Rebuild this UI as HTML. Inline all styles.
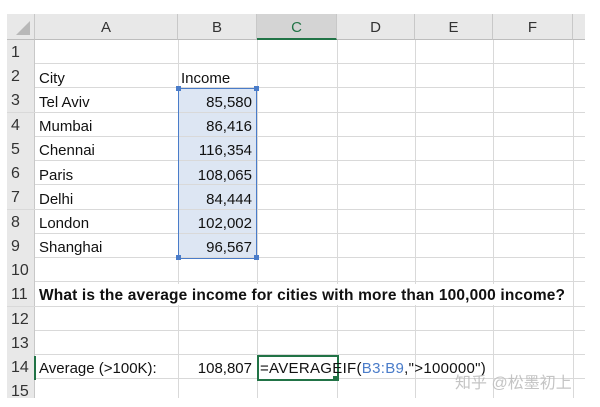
<!DOCTYPE html><html><head><style>
body{margin:0;width:600px;height:407px;background:#fff;overflow:hidden;font-family:"Liberation Sans",sans-serif;}
#g{position:absolute;left:7px;top:14px;width:578px;height:384px;overflow:hidden;background:#fff}
.v{position:absolute;top:0;width:1px;height:384px;background:#d9d9d9}
.h{position:absolute;left:0;height:1px;width:578px;background:#d9d9d9}
.t{position:absolute;font-size:15px;color:#111;line-height:24px;white-space:nowrap}
.r{text-align:right}
.hd{position:absolute;top:0;height:26px;background:#e8e8e8;border-right:1px solid #c8c8c8;border-bottom:1px solid #bdbdbd;box-sizing:border-box;font-size:15px;color:#333;text-align:center;line-height:27px}
.rn{position:absolute;left:0;width:28px;height:24px;background:#e8e8e8;border-right:1px solid #c8c8c8;box-sizing:border-box;font-size:16px;color:#333;padding-left:4px;line-height:25px}
</style></head><body><div id="g">
<div style="position:absolute;left:171px;top:74px;width:79px;height:170px;background:#dde6f3"></div>
<div class="v" style="left:171px"></div><div class="v" style="left:250px"></div><div class="v" style="left:330px"></div><div class="v" style="left:408px"></div><div class="v" style="left:486px"></div><div class="v" style="left:566px"></div>
<div class="h" style="top:49px"></div><div class="h" style="top:73px"></div><div class="h" style="top:98px"></div><div class="h" style="top:122px"></div><div class="h" style="top:146px"></div><div class="h" style="top:170px"></div><div class="h" style="top:195px"></div><div class="h" style="top:219px"></div><div class="h" style="top:243px"></div><div class="h" style="top:267px"></div><div class="h" style="top:292px"></div><div class="h" style="top:316px"></div><div class="h" style="top:340px"></div><div class="h" style="top:364px"></div>
<div class="rn" style="top:26px">1</div><div class="rn" style="top:50px">2</div><div class="rn" style="top:74px">3</div><div class="rn" style="top:99px">4</div><div class="rn" style="top:123px">5</div><div class="rn" style="top:147px">6</div><div class="rn" style="top:171px">7</div><div class="rn" style="top:196px">8</div><div class="rn" style="top:220px">9</div><div class="rn" style="top:244px">10</div><div class="rn" style="top:268px">11</div><div class="rn" style="top:293px">12</div><div class="rn" style="top:317px">13</div><div class="rn" style="top:341px">14</div><div class="rn" style="top:365px">15</div>
<div class="hd" style="left:0;width:28px"><div style="position:absolute;right:4px;bottom:4px;width:0;height:0;border-left:14px solid transparent;border-bottom:14px solid #b8b8b8"></div></div>
<div class="hd" style="left:28px;width:143px">A</div>
<div class="hd" style="left:171px;width:79px">B</div>
<div class="hd" style="left:250px;width:80px;background:#d4d4d4;border-bottom:2px solid #217346;color:#217346">C</div>
<div class="hd" style="left:330px;width:78px">D</div>
<div class="hd" style="left:408px;width:78px">E</div>
<div class="hd" style="left:486px;width:80px">F</div>
<div class="hd" style="left:566px;width:12px;border-right:none"></div>
<div style="position:absolute;left:171px;top:74px;width:77px;height:169px;border:1px solid #4a7cc9;"></div>
<div style="position:absolute;left:169px;top:72px;width:5px;height:5px;background:#4a7cc9"></div>
<div style="position:absolute;left:247px;top:72px;width:5px;height:5px;background:#4a7cc9"></div>
<div style="position:absolute;left:169px;top:241px;width:5px;height:5px;background:#4a7cc9"></div>
<div style="position:absolute;left:247px;top:241px;width:5px;height:5px;background:#4a7cc9"></div>
<div style="position:absolute;left:250px;top:341px;width:78px;height:22px;border:2px solid #217346;background:#fff"></div>
<div style="position:absolute;left:326px;top:362px;width:5px;height:5px;background:#217346"></div>
<div style="position:absolute;left:27px;top:342px;width:2px;height:24px;background:#217346"></div>
<div class="t" style="left:32px;top:53px">City</div><div class="t" style="left:174px;top:53px">Income</div>
<div class="t" style="left:32px;top:77px">Tel Aviv</div><div class="t r" style="left:171px;width:74px;top:77px">85,580</div>
<div class="t" style="left:32px;top:101px">Mumbai</div><div class="t r" style="left:171px;width:74px;top:101px">86,416</div>
<div class="t" style="left:32px;top:125px">Chennai</div><div class="t r" style="left:171px;width:74px;top:125px">116,354</div>
<div class="t" style="left:32px;top:150px">Paris</div><div class="t r" style="left:171px;width:74px;top:150px">108,065</div>
<div class="t" style="left:32px;top:174px">Delhi</div><div class="t r" style="left:171px;width:74px;top:174px">84,444</div>
<div class="t" style="left:32px;top:198px">London</div><div class="t r" style="left:171px;width:74px;top:198px">102,002</div>
<div class="t" style="left:32px;top:222px">Shanghai</div><div class="t r" style="left:171px;width:74px;top:222px">96,567</div>
<div class="t" style="left:32px;top:270px;height:21px;font-size:15.5px;font-weight:bold;background:#fff;padding-right:2px;letter-spacing:0.15px">What is the average income for cities with more than 100,000 income?</div>
<div class="t" style="left:32px;top:343px">Average (&gt;100K):</div><div class="t r" style="left:171px;width:74px;top:343px">108,807</div>
<div class="t" style="left:253px;top:343px;letter-spacing:0.3px">=AVERAGEIF(<span style="color:#4a7cc9">B3:B9</span>,"&gt;100000")</div>
<div class="t" style="left:448px;top:358px;font-family:'Liberation Sans','Noto Sans CJK SC',sans-serif;color:rgba(190,190,190,.9);font-size:16px">知乎 @松墨初上</div>
</div>
</body></html>
